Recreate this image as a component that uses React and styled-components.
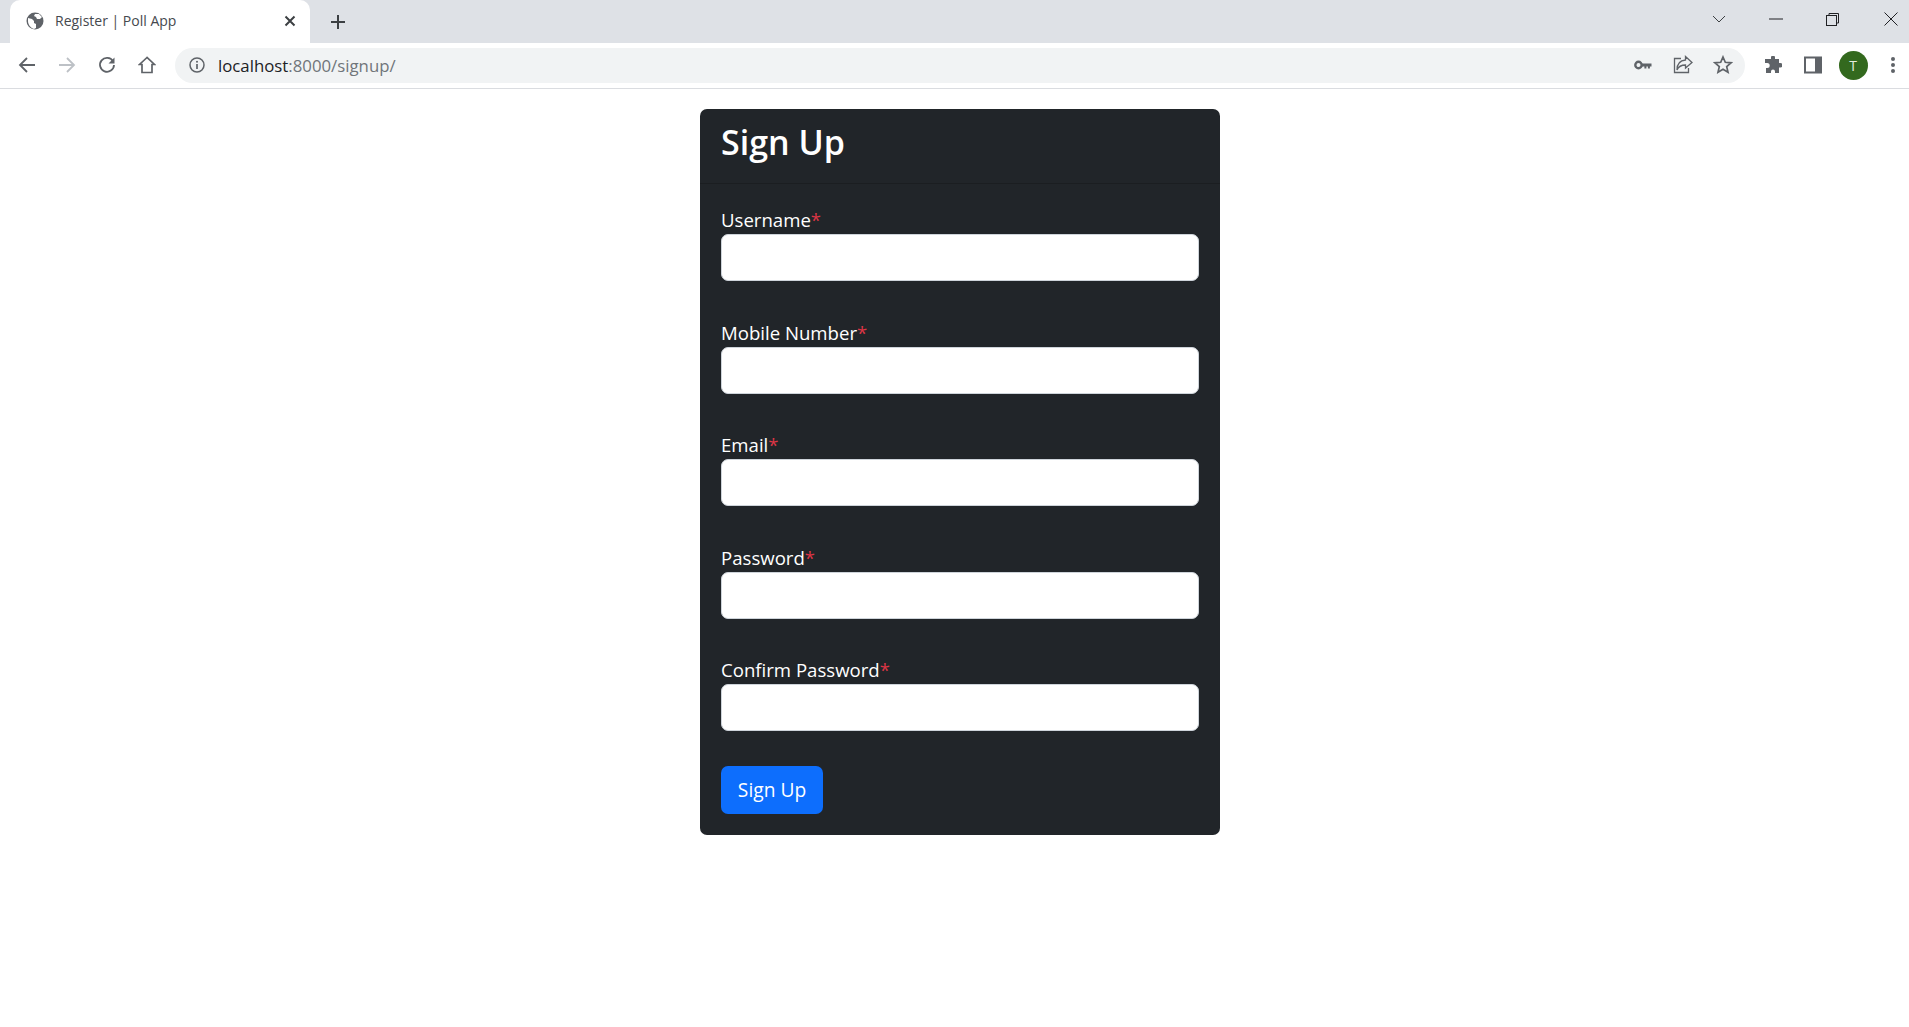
import React from 'react';
import styled, { createGlobalStyle } from 'styled-components';

const GlobalStyle = createGlobalStyle`
  html, body {
    margin: 0;
    padding: 0;
    background: #fff;
    font-family: "Open Sans", "Noto Sans", sans-serif;
  }
  * { box-sizing: border-box; }
`;

const Page = styled.div`
  width: 1909px;
  height: 1027px;
  overflow: hidden;
  background: #fff;
`;

const TabStrip = styled.div`
  height: 43px;
  background: #dee1e6;
  display: flex;
  align-items: flex-end;
  padding-left: 10px;
`;

const Tab = styled.div`
  width: 300px;
  height: 43px;
  background: #fff;
  border-radius: 10px 10px 0 0;
  display: flex;
  align-items: center;
  padding: 0 14px 2px 16px;
`;

const TabTitle = styled.span`
  flex: 1;
  margin-left: 11px;
  font-size: 14px;
  color: #45494e;
  white-space: nowrap;
`;

const NewTab = styled.div`
  width: 28px;
  height: 28px;
  margin: 0 0 7px 14px;
  display: flex;
  align-items: center;
  justify-content: center;
`;

const WindowControls = styled.div`
  margin-left: auto;
  height: 43px;
  display: flex;
  align-items: flex-start;
`;

const WindowButton = styled.div`
  width: 57px;
  height: 38px;
  display: flex;
  align-items: center;
  justify-content: center;
`;

const CloseButton = styled(WindowButton)`
  width: 36px;
  margin-left: 12px;
`;

const Toolbar = styled.div`
  height: 46px;
  background: #fff;
  border-bottom: 1px solid #dadce0;
  display: flex;
  align-items: center;
  padding: 0 0 1px 7px;
`;

const NavButton = styled.div`
  flex-shrink: 0;
  width: 40px;
  height: 36px;
  display: flex;
  align-items: center;
  justify-content: center;
`;

const Omnibox = styled.div`
  flex-shrink: 0;
  width: 1570px;
  height: 35px;
  margin-left: 8px;
  margin-right: 8px;
  border-radius: 18px;
  background: #f1f3f4;
  display: flex;
  align-items: center;
  padding: 0 2px 0 14px;
`;

const Url = styled.span`
  margin-left: 13px;
  font-size: 16.8px;
  color: #70757a;
  white-space: nowrap;
  flex: 1;
  b { font-weight: 400; color: #202124; }
`;

const Content = styled.main`
  padding: 20px 0 0 700px;
`;

const Card = styled.form`
  width: 520px;
  height: 726px;
  background: #212529;
  border-radius: 7px;
  color: #fff;
`;

const CardHeader = styled.div`
  height: 75px;
  padding: 0 21px;
  border-bottom: 1px solid #1b1e21;
  display: flex;
  align-items: center;
`;

const Title = styled.h2`
  margin: 0 0 7px;
  font-size: 34px;
  font-weight: 600;
  line-height: 1.2;
`;

const CardBody = styled.div`
  padding: 21px;
  display: flex;
  flex-direction: column;
`;

const Field = styled.div`
  height: 112.5px;
`;

const Label = styled.label`
  display: block;
  height: 29px;
  padding-top: 2px;
  font-size: 18.6px;
  line-height: 26px;
  white-space: nowrap;
  span { color: #dc3545; }
`;

const Input = styled.input`
  display: block;
  width: 100%;
  height: 47px;
  border: 1px solid #ced4da;
  border-radius: 7px;
  background: #fff;
  outline: none;
`;

const SubmitButton = styled.button`
  align-self: flex-start;
  width: 102px;
  height: 48px;
  margin-top: -2px;
  border: 0;
  border-radius: 7px;
  background: #0d6efd;
  color: #fff;
  font: 400 19.2px "Open Sans", "Noto Sans", sans-serif;
`;

const Avatar = styled.div`
  width: 29px;
  height: 29px;
  border-radius: 50%;
  background: #33691e;
  color: #e4ecdf;
  font-size: 14px;
  display: flex;
  align-items: center;
  justify-content: center;
`;

const fields = ['Username', 'Mobile Number', 'Email', 'Password', 'Confirm Password'];
const G = '#5f6368';

const App = () => (
  <Page>
    <GlobalStyle />
    <TabStrip>
      <Tab>
        <svg width="18" height="18" viewBox="0 0 18 18">
          <circle cx="9" cy="9" r="8.5" fill={G} />
          <path d="M2 6l4 1 2 2v2l2 1v4l-2 1C5 16 2 13 2 9zM9 2l4 0 3 3-2 2h-3l-1-2-2-1z" fill="#fff" />
        </svg>
        <TabTitle>Register | Poll App</TabTitle>
        <svg width="12" height="12" viewBox="0 0 12 12">
          <path d="M1.5 1.5l9 9M10.5 1.5l-9 9" stroke="#3c4043" strokeWidth="2" />
        </svg>
      </Tab>
      <NewTab>
        <svg width="16" height="16" viewBox="0 0 16 16">
          <path d="M8 1v14M1 8h14" stroke="#3c4043" strokeWidth="2" />
        </svg>
      </NewTab>
      <WindowControls>
        <WindowButton>
          <svg width="14" height="8" viewBox="0 0 14 8" fill="none">
            <path d="M1 1l6 6 6-6" stroke="#3c4043" />
          </svg>
        </WindowButton>
        <WindowButton>
          <svg width="14" height="2" viewBox="0 0 14 2">
            <path d="M0 1h14" stroke="#202124" />
          </svg>
        </WindowButton>
        <WindowButton>
          <svg width="13" height="13" viewBox="0 0 13 13" fill="none">
            <rect x=".5" y="2.5" width="10" height="10" stroke="#202124" />
            <path d="M3 2.5V.5h9.5V10h-2" stroke="#202124" />
          </svg>
        </WindowButton>
        <CloseButton>
          <svg width="14" height="14" viewBox="0 0 14 14">
            <path d="M.5.5l13 13M13.5.5l-13 13" stroke="#202124" />
          </svg>
        </CloseButton>
      </WindowControls>
    </TabStrip>
    <Toolbar>
      <NavButton>
        <svg width="18" height="18" viewBox="0 0 18 18" fill="none">
          <path d="M17 9H2M9 2L2 9l7 7" stroke={G} strokeWidth="1.8" />
        </svg>
      </NavButton>
      <NavButton>
        <svg width="18" height="18" viewBox="0 0 18 18" fill="none">
          <path d="M1 9h15M9 2l7 7-7 7" stroke="#bdc1c6" strokeWidth="1.8" />
        </svg>
      </NavButton>
      <NavButton>
        <svg width="18" height="18" viewBox="0 0 18 18" fill="none">
          <path d="M15 5.2A7 7 0 1 0 16 9" stroke={G} strokeWidth="1.8" />
          <path d="M16.5 1.5v6h-6z" fill={G} />
        </svg>
      </NavButton>
      <NavButton>
        <svg width="18" height="18" viewBox="0 0 18 18" fill="none">
          <path d="M9 1.5L1.5 8.5H4v8h10v-8h2.5z" stroke={G} strokeWidth="1.7" />
        </svg>
      </NavButton>
      <Omnibox>
        <svg width="16" height="16" viewBox="0 0 16 16" fill="none">
          <circle cx="8" cy="8" r="7" stroke={G} strokeWidth="1.5" />
          <path d="M8 7v5" stroke={G} strokeWidth="1.7" />
          <circle cx="8" cy="4.8" r="1" fill={G} />
        </svg>
        <Url><b>localhost</b>:8000/signup/</Url>
        <NavButton>
          <svg width="18" height="10" viewBox="0 0 18 10" fill="none">
            <circle cx="4.5" cy="5" r="3.2" stroke={G} strokeWidth="2.4" />
            <path d="M8 3.6h9.5v3h-1.6v2h-2v-2h-1.5v2h-2v-2H8z" fill={G} />
          </svg>
        </NavButton>
        <NavButton>
          <svg width="20" height="20" viewBox="0 0 20 20" fill="none">
            <path d="M8 3.5H1.5v14h14V13" stroke={G} strokeWidth="1.3" />
            <path d="M12.5 1.5l6.5 6-6.5 5.5V10C8 10 5.5 11.5 4 15c0-6 3-9.5 8.5-10z" stroke={G} strokeWidth="1.3" fill="#f1f3f4" />
          </svg>
        </NavButton>
        <NavButton>
          <svg width="20" height="20" viewBox="0 0 20 20" fill="none">
            <path d="M10 2l2.3 5.3 5.7.5-4.3 3.8 1.3 5.6-5-3-5 3 1.3-5.6L2 7.8l5.7-.5z" stroke={G} strokeWidth="1.7" />
          </svg>
        </NavButton>
      </Omnibox>
      <NavButton>
        <svg width="18" height="18" viewBox="0 0 18 18">
          <path d="M7 1.5a2 2 0 0 1 4 0V3h4v4h1.5a2.2 2.2 0 0 1 0 4.5H15V17h-4v-1.5a2 2 0 0 0-4 0V17H2v-5h1.2a2.5 2.5 0 0 0 0-5H1V3h6z" fill={G} />
        </svg>
      </NavButton>
      <NavButton>
        <svg width="18" height="18" viewBox="0 0 18 18" fill="none">
          <rect x="1" y="1.5" width="16" height="15" stroke={G} strokeWidth="2" />
          <rect x="11" y="2" width="6" height="14" fill={G} />
        </svg>
      </NavButton>
      <NavButton>
        <Avatar>T</Avatar>
      </NavButton>
      <NavButton>
        <svg width="6" height="18" viewBox="0 0 6 18">
          <circle cx="3" cy="3" r="2" fill={G} />
          <circle cx="3" cy="9" r="2" fill={G} />
          <circle cx="3" cy="15" r="2" fill={G} />
        </svg>
      </NavButton>
    </Toolbar>
    <Content>
      <Card>
        <CardHeader>
          <Title>Sign Up</Title>
        </CardHeader>
        <CardBody>
          {fields.map(name => (
            <Field key={name}>
              <Label>{name}<span>*</span></Label>
              <Input type="text" />
            </Field>
          ))}
          <SubmitButton type="button">Sign Up</SubmitButton>
        </CardBody>
      </Card>
    </Content>
  </Page>
);

export default App;
